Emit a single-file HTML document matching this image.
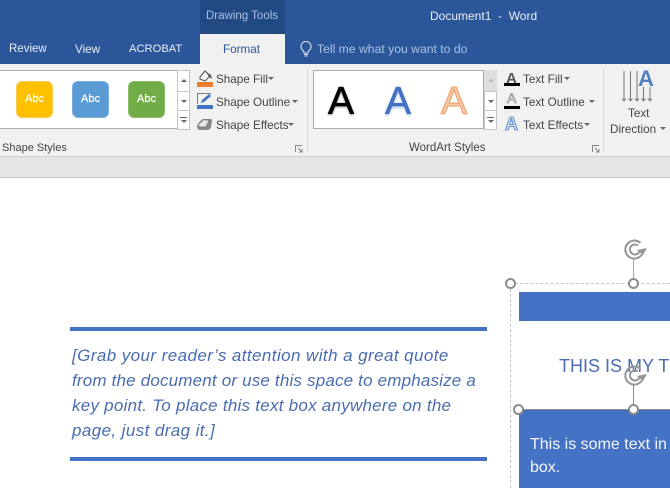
<!DOCTYPE html>
<html>
<head>
<meta charset="utf-8">
<style>
html,body{margin:0;padding:0;}
body{width:670px;height:488px;overflow:hidden;background:#fff;position:relative;font-family:"Liberation Sans",sans-serif;}
.a{position:absolute;}
.t{position:absolute;white-space:nowrap;font-size:11.7px;line-height:17px;color:#444;}
.w{color:#e8eef7;}
.c{border-radius:6px;width:37px;height:37px;top:81px;color:#fff;font-size:11px;line-height:35px;text-align:center;box-sizing:border-box;-webkit-text-stroke:.25px #fff;}
.q{position:absolute;left:72px;white-space:nowrap;font-style:italic;font-size:17px;line-height:25px;color:#4a6cb0;}
.h{position:absolute;width:7px;height:7px;border:2px solid #8c8c8c;border-radius:50%;background:#fff;box-sizing:content-box;}
.caret{position:absolute;width:0;height:0;border-left:3px solid transparent;border-right:3px solid transparent;border-top:3px solid #666;}
</style>
</head>
<body>
<!-- title bar -->
<div class="a" style="left:0;top:0;width:670px;height:64px;background:#2b579a;"></div>
<div class="a" style="left:200px;top:0;width:85px;height:34px;background:#214a85;"></div>
<div class="a" style="left:200px;top:34px;width:85px;height:30px;background:#f1f1f1;"></div>
<div class="t" style="left:206px;top:8px;color:#a9bfde;font-size:11.5px;">Drawing Tools</div>
<div class="t" style="left:430px;top:8px;color:#e8eef7;font-size:12px;">Document1 &nbsp;-&nbsp; Word</div>
<div class="t w" style="left:9px;top:41px;font-size:11.5px;">Review</div>
<div class="t w" style="left:75px;top:41px;font-size:11.7px;">View</div>
<div class="t w" style="left:129px;top:41px;font-size:11.2px;">ACROBAT</div>
<div class="t" style="left:223px;top:41px;color:#2b579a;font-size:11.7px;">Format</div>
<svg class="a" style="left:298px;top:40px;" width="16" height="18" viewBox="0 0 16 18"><path d="M8 1.5a5 5 0 0 0-3 9c.8.7 1 1.3 1 2.5h4c0-1.2.2-1.8 1-2.5a5 5 0 0 0-3-9z" fill="none" stroke="#dfe7f3" stroke-width="1.1"/><path d="M6 14.5h4M6.5 16h3" stroke="#dfe7f3" stroke-width="1.1"/></svg>
<div class="t" style="left:317px;top:41px;color:#a9c1e2;font-size:12.2px;">Tell me what you want to do</div>

<!-- ribbon -->
<div class="a" style="left:0;top:64px;width:670px;height:92px;background:#f1f1f1;"></div>
<div class="a" style="left:0;top:156px;width:670px;height:1px;background:#d0d0d0;"></div>
<div class="a" style="left:0;top:157px;width:670px;height:20px;background:#e6e6e6;"></div>
<div class="a" style="left:0;top:177px;width:670px;height:1px;background:#c6c6c6;"></div>
<div class="a" style="left:307px;top:68px;width:1px;height:84px;background:#dcdcdc;"></div>
<div class="a" style="left:603px;top:68px;width:1px;height:84px;background:#dcdcdc;"></div>

<!-- Shape gallery -->
<div class="a" style="left:-2px;top:70px;width:179px;height:57px;background:#fff;border:1px solid #ababab;"></div>
<div class="a" style="left:177px;top:70px;width:13px;height:60px;background:#fff;border:1px solid #c6c6c6;box-sizing:border-box;"></div>
<div class="a" style="left:177px;top:91px;width:13px;height:1px;background:#c6c6c6;"></div>
<div class="a" style="left:177px;top:110px;width:13px;height:1px;background:#c6c6c6;"></div>
<div class="c a" style="left:16px;background:#ffc000;border:1px solid #f5cc55;">Abc</div>
<div class="c a" style="left:72px;background:#5b9bd5;border:1px solid #7aaedd;">Abc</div>
<div class="c a" style="left:128px;background:#70ad47;border:1px solid #8bbd6a;">Abc</div>
<div class="a" style="left:181px;top:79px;width:0;height:0;border-left:3px solid transparent;border-right:3px solid transparent;border-bottom:3px solid #666;"></div>
<div class="caret" style="left:181px;top:100px;"></div>
<div class="a" style="left:180px;top:117px;width:7px;height:1px;background:#666;"></div>
<div class="caret" style="left:181px;top:120px;"></div>

<!-- Shape commands -->
<svg class="a" style="left:196px;top:69px;" width="20" height="20" viewBox="0 0 20 20"><path d="M4 8l5-6 5 5-5 5-5-2z" fill="#fff" stroke="#555" stroke-width="1.1"/><path d="M10 3l5 3 1 4-3-2z" fill="#555"/><rect x="1" y="13" width="16" height="5" fill="#ed7d31"/></svg>
<svg class="a" style="left:196px;top:92px;" width="18" height="18" viewBox="0 0 18 18"><path d="M1.5 12V1.500H15" fill="none" stroke="#7f7f7f"/><path d="M5 11l1-3 7-6 2 2-7 6z" fill="#4472c4"/><rect x="1" y="13" width="16" height="4" fill="#4472c4"/></svg>
<svg class="a" style="left:196px;top:115px;" width="18" height="18" viewBox="0 0 18 18"><path d="M1 11c1-3 4-6 6-7h8c1 0 1 1 1 2l-1 6c-.5 2-2 3-4 3H4c-2 0-3-2-3-4z" fill="#8a8a8a"/><path d="M2 10l5-5h6l-3 7H4z" fill="#e4e4e4" stroke="#777" stroke-width=".7"/></svg>
<div class="t" style="left:216px;top:71px;">Shape Fill</div>
<div class="caret" style="left:268px;top:77px;"></div>
<div class="t" style="left:216px;top:94px;">Shape Outline</div>
<div class="caret" style="left:292px;top:100px;"></div>
<div class="t" style="left:216px;top:117px;">Shape Effects</div>
<div class="caret" style="left:288px;top:123px;"></div>
<div class="t" style="left:2px;top:140px;font-size:11px;">Shape Styles</div>
<svg class="a" style="left:295px;top:145px;" width="8" height="8" viewBox="0 0 8 8"><path d="M.5 7V.5H7" fill="none" stroke="#888"/><path d="M3 3l4 4M7 4v3H4" fill="none" stroke="#888"/></svg>

<!-- WordArt gallery -->
<div class="a" style="left:313px;top:70px;width:169px;height:57px;background:#fff;border:1px solid #ababab;"></div>
<div class="a" style="left:484px;top:70px;width:13px;height:21px;background:#dedede;"></div>
<div class="a" style="left:484px;top:91px;width:13px;height:39px;background:#fff;border:1px solid #c6c6c6;box-sizing:border-box;"></div>
<div class="a" style="left:484px;top:110px;width:13px;height:1px;background:#c6c6c6;"></div>
<div class="a" style="left:488px;top:79px;width:0;height:0;border-left:3px solid transparent;border-right:3px solid transparent;border-bottom:3px solid #bdbdbd;"></div>
<div class="caret" style="left:488px;top:100px;"></div>
<div class="a" style="left:487px;top:117px;width:7px;height:1px;background:#666;"></div>
<div class="caret" style="left:488px;top:120px;"></div>
<div class="t" style="left:328px;top:80px;font-size:39px;line-height:44px;color:#000;-webkit-text-stroke:.6px #000;text-shadow:0 1px 2px #777;">A</div>
<div class="t" style="left:385px;top:80px;font-size:39px;line-height:44px;color:#4472c4;-webkit-text-stroke:.6px #4472c4;text-shadow:0 2px 2px #b8c7e6;">A</div>
<div class="t" style="left:441px;top:80px;font-size:39px;line-height:44px;color:#f8c9a8;-webkit-text-stroke:1px #ed9a62;">A</div>

<!-- Text commands -->
<div class="t" style="left:506px;top:70px;font-size:15px;font-weight:bold;color:#555;">A</div>
<div class="a" style="left:504px;top:83px;width:16px;height:3px;background:#000;"></div>
<div class="t" style="left:507px;top:90px;font-size:14px;color:#fff;-webkit-text-stroke:.6px #777;">A</div>
<div class="a" style="left:504px;top:106px;width:16px;height:3px;background:#000;"></div>
<div class="t" style="left:505px;top:116px;font-size:18px;font-weight:bold;color:#d5e3f4;-webkit-text-stroke:.8px #4a78b8;">A</div>
<div class="t" style="left:523px;top:71px;">Text Fill</div>
<div class="caret" style="left:564px;top:77px;"></div>
<div class="t" style="left:523px;top:94px;">Text Outline</div>
<div class="caret" style="left:589px;top:100px;"></div>
<div class="t" style="left:523px;top:117px;">Text Effects</div>
<div class="caret" style="left:584px;top:123px;"></div>
<div class="t" style="left:409px;top:140px;font-size:11.5px;">WordArt Styles</div>
<svg class="a" style="left:592px;top:145px;" width="8" height="8" viewBox="0 0 8 8"><path d="M.5 7V.5H7" fill="none" stroke="#888"/><path d="M3 3l4 4M7 4v3H4" fill="none" stroke="#888"/></svg>

<!-- Text direction -->
<svg class="a" style="left:620px;top:69px;" width="38" height="36" viewBox="0 0 38 36"><g fill="none" stroke="#777" stroke-width="1"><path d="M4 2V32M10.500 2V32M17 2V32M23.500 18V32M30 18V32"/><path d="M2 29.500l2 2.500 2-2.500M8.500 29.500l2 2.500 2-2.500M15 29.500l2 2.500 2-2.500M21.500 29.500l2 2.500 2-2.500M28 29.500l2 2.500 2-2.500"/></g></svg>
<div class="t" style="left:638px;top:66px;font-size:22px;line-height:26px;color:#5282bd;font-weight:bold;">A</div>
<div class="t" style="left:628px;top:105px;">Text</div>
<div class="t" style="left:610px;top:121px;">Direction</div>
<div class="caret" style="left:660px;top:127px;"></div>

<!-- Quote -->
<div class="a" style="left:70px;top:327px;width:417px;height:4px;background:#4472c4;"></div>
<div class="q" style="top:343px;letter-spacing:.42px;">[Grab your reader’s attention with a great quote</div>
<div class="q" style="top:368px;letter-spacing:.18px;">from the document or use this space to emphasize a</div>
<div class="q" style="top:393px;letter-spacing:.25px;">key point. To place this text box anywhere on the</div>
<div class="q" style="top:418px;letter-spacing:.4px;">page, just drag it.]</div>
<div class="a" style="left:70px;top:457px;width:417px;height:4px;background:#4472c4;"></div>

<!-- Selected textbox -->
<div class="a" style="left:510px;top:283px;width:160px;height:1px;border-top:1px dashed #c4c4c4;box-sizing:border-box;"></div>
<div class="a" style="left:510px;top:284px;width:1px;height:204px;border-left:1px dashed #c4c4c4;box-sizing:border-box;"></div>
<div class="a" style="left:519px;top:292px;width:151px;height:29px;background:#4472c4;"></div>
<div class="t" style="left:559px;top:353px;font-size:18px;line-height:26px;color:#4a6cb0;">THIS IS MY T</div>
<div class="a" style="left:519px;top:409px;width:151px;height:1px;background:#8c8c8c;"></div>
<div class="a" style="left:519px;top:410px;width:151px;height:78px;background:#4472c4;"></div>
<div class="t" style="left:530px;top:433px;font-size:16px;line-height:24px;color:#f4f7fc;">This is some text in</div>
<div class="t" style="left:530px;top:456px;font-size:16px;line-height:24px;color:#f4f7fc;">box.</div>

<!-- Handles -->
<div class="a" style="left:633px;top:259px;width:1px;height:20px;background:#a6a6a6;"></div>
<div class="a" style="left:633px;top:385px;width:1px;height:20px;background:#8c8c8c;"></div>
<div class="h" style="left:505px;top:278px;"></div>
<div class="h" style="left:628px;top:278px;"></div>
<div class="h" style="left:513px;top:404px;"></div>
<div class="h" style="left:628px;top:404px;"></div>
<svg class="a" style="left:622px;top:238px;" width="28" height="24" viewBox="0 0 28 24"><g fill="none" stroke="#969696" stroke-width="2"><path d="M18.500 5a9 9 0 1 0 2.500 9"/><path d="M16 7.500a5 5 0 1 0 1.500 6"/></g><path d="M15 12l10-2-4 7z" fill="#969696"/></svg>
<svg class="a" style="left:622px;top:364px;" width="28" height="24" viewBox="0 0 28 24"><g fill="none" stroke="#969696" stroke-width="2"><path d="M18.500 5a9 9 0 1 0 2.500 9"/><path d="M16 7.500a5 5 0 1 0 1.500 6"/></g><path d="M15 12l10-2-4 7z" fill="#969696"/></svg>
</body>
</html>
